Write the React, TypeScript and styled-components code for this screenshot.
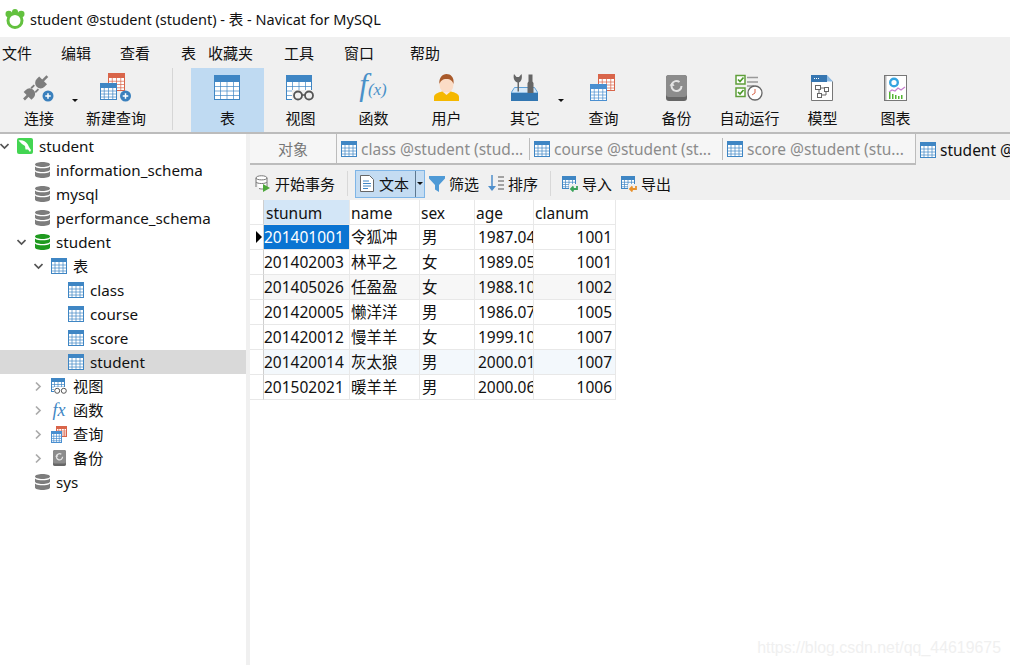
import React from 'react';
import styled, { createGlobalStyle } from 'styled-components';

const GlobalStyle = createGlobalStyle`
  html, body {
    margin: 0;
    padding: 0;
    width: 1010px;
    height: 665px;
    overflow: hidden;
    background: #fff;
    font-family: "Noto Sans", "Noto Sans CJK SC", sans-serif;
    color: #111;
  }
`;

const BLUE = '#3f86c4';
const RED = '#d9654a';

const Window = styled.div`
  position: relative;
  display: flex;
  flex-direction: column;
  width: 1010px;
  height: 665px;
  overflow: hidden;
`;

const TitleBar = styled.header`
  display: flex;
  align-items: center;
  gap: 5px;
  height: 37px;
  padding-left: 5px;
  font-size: 14.5px;
  background: #fff;
`;

const MenuBar = styled.nav`
  display: flex;
  align-items: center;
  height: 31px;
  padding-left: 2px;
  font-size: 15px;
  background: #f0f0f0;
`;

const MenuItem = styled.span<{ $w: number }>`
  width: ${(p) => p.$w}px;
  flex: none;
`;

const Toolbar = styled.div`
  display: flex;
  height: 64px;
  background: #f0f0f0;
  border-bottom: 2px solid #bcbcbc;
`;

const ToolButton = styled.div<{ $w?: number; $active?: boolean }>`
  position: relative;
  flex: none;
  width: ${(p) => p.$w ?? 73}px;
  height: 64px;
  display: flex;
  flex-direction: column;
  align-items: center;
  background: ${(p) => (p.$active ? '#bfdaf2' : 'transparent')};
`;

const ToolIcon = styled.div`
  height: 41px;
  display: flex;
  align-items: center;
  justify-content: center;
  padding: 0 1px 2px 0;
  box-sizing: border-box;
`;

const ToolLabel = styled.span`
  font-size: 15px;
  line-height: 18px;
  white-space: nowrap;
`;

const DropCaret = styled.span<{ $right: number }>`
  position: absolute;
  top: 31px;
  right: ${(p) => p.$right}px;
  border-left: 3px solid transparent;
  border-right: 3px solid transparent;
  border-top: 3px solid #111;
`;

const ToolSep = styled.div<{ $left: number; $right: number }>`
  flex: none;
  width: 1px;
  height: 62px;
  background: #d6d6d6;
  margin: 0 ${(p) => p.$right}px 0 ${(p) => p.$left}px;
`;

const FxMark = styled.span`
  font-family: "Liberation Serif", serif;
  font-style: italic;
  color: #4a90c8;
  font-size: 31px;
  line-height: 36px;
  white-space: nowrap;
  small {
    font-size: 17px;
  }
`;

const Body = styled.div`
  flex: 1;
  min-height: 0;
  display: flex;
`;

const Sidebar = styled.aside`
  flex: none;
  width: 246px;
  background: #fff;
  font-size: 15.2px;
`;

const Splitter = styled.div`
  flex: none;
  width: 4px;
  background: #f0f0f0;
`;

const TreeRow = styled.div<{ $level: number; $selected?: boolean }>`
  display: flex;
  align-items: center;
  height: 24px;
  padding-left: ${(p) => p.$level * 17}px;
  background: ${(p) => (p.$selected ? '#d9d9d9' : 'transparent')};
  white-space: nowrap;
`;

const Chevron = styled.span`
  flex: none;
  width: 17px;
  margin-left: -4px;
  margin-right: 4px;
  display: flex;
  justify-content: center;
`;

const TreeIcon = styled.span`
  flex: none;
  display: flex;
  width: 16px;
  height: 16px;
  margin-right: 6px;
  align-items: center;
  justify-content: center;
`;

const CjkLabel = styled.span`
  margin-top: -2px;
`;

const TreeFx = styled.span`
  font-family: "Liberation Serif", serif;
  font-style: italic;
  font-size: 18px;
  color: ${BLUE};
  white-space: nowrap;
`;

const Main = styled.main`
  flex: 1;
  min-width: 0;
  display: flex;
  flex-direction: column;
  background: #fff;
`;

const TabStrip = styled.div`
  display: flex;
  height: 31px;
  flex: none;
  background: #f0f0f0;
  font-size: 15.5px;
  white-space: nowrap;
  overflow: hidden;
`;

const ObjectTab = styled.div`
  flex: none;
  width: 87px;
  box-sizing: border-box;
  display: flex;
  align-items: center;
  justify-content: center;
  font-size: 15px;
  color: #777;
  background: #f6f6f6;
  border-bottom: 2px solid #bcbcbc;
  border-right: 1px solid #bcbcbc;
`;

const Tab = styled.div<{ $edge?: boolean }>`
  flex: none;
  width: 193px;
  box-sizing: border-box;
  padding-left: 4px;
  display: flex;
  align-items: center;
  gap: 4px;
  color: #8c8c8c;
  border-bottom: 2px solid #bcbcbc;
  border-right: ${(p) => (p.$edge ? '1px solid #bcbcbc' : '0')};
  background: ${(p) =>
    p.$edge
      ? '#f6f6f6'
      : 'linear-gradient(#bcbcbc, #bcbcbc) right center / 1px 22px no-repeat #f6f6f6'};
`;

const ActiveTab = styled.div`
  flex: none;
  padding-left: 4px;
  display: flex;
  align-items: center;
  gap: 4px;
  color: #111;
`;

const SubBar = styled.div`
  flex: none;
  display: flex;
  align-items: center;
  box-sizing: border-box;
  height: 35px;
  padding: 2px 0 0 5px;
  background: #f0f0f0;
  font-size: 15px;
  white-space: nowrap;
`;

const SubItem = styled.div<{ $w: number }>`
  flex: none;
  width: ${(p) => p.$w}px;
  display: flex;
  align-items: center;
  gap: 4px;
`;

const SubSep = styled.div<{ $left: number; $right: number }>`
  flex: none;
  width: 1px;
  height: 25px;
  background: #d8d8d8;
  margin: 0 ${(p) => p.$right}px 0 ${(p) => p.$left}px;
`;

const TextButton = styled.div`
  flex: none;
  width: 70px;
  height: 28px;
  box-sizing: border-box;
  display: flex;
  align-items: center;
  margin-right: 4px;
  padding-left: 4px;
  gap: 5px;
  background: #c4dcf2;
  border: 1px solid #7fb5e6;
`;

const ButtonSplit = styled.span`
  margin-left: auto;
  width: 8px;
  height: 100%;
  display: flex;
  align-items: center;
  justify-content: center;
  border-left: 1px solid #5d7890;
  &::after {
    content: '';
    border-left: 3px solid transparent;
    border-right: 3px solid transparent;
    border-top: 3px solid #111;
  }
`;

const Grid = styled.div`
  display: grid;
  grid-template-columns: 14px 86px 70px 55px 59px 82px;
  width: 366px;
  font-size: 15.5px;
`;

const Cell = styled.div<{ $right?: boolean; $bg?: string; $selected?: boolean; $pad: number }>`
  height: 25px;
  box-sizing: border-box;
  padding: 0 3px 0 ${(p) => p.$pad}px;
  line-height: 24px;
  overflow: hidden;
  white-space: nowrap;
  text-align: ${(p) => (p.$right ? 'right' : 'left')};
  color: ${(p) => (p.$selected ? '#fff' : '#111')};
  background: ${(p) => (p.$selected ? '#0a74d2' : p.$bg ?? '#fff')};
  border-right: 1px solid #e8e8e8;
  border-bottom: 1px solid #e8e8e8;
`;

const HeaderCell = styled(Cell)<{ $current?: boolean }>`
  line-height: 26px;
  background: ${(p) => (p.$current ? '#d3e6f7' : '#fff')};
`;

const RowHead = styled.div<{ $marker?: boolean }>`
  height: 25px;
  box-sizing: border-box;
  border-right: 1px solid #cfcfcf;
  border-bottom: 1px solid #e8e8e8;
  display: flex;
  align-items: center;
  justify-content: flex-end;
  padding-right: 1px;
  &::after {
    content: '';
    display: ${(p) => (p.$marker ? 'block' : 'none')};
    border-top: 6px solid transparent;
    border-bottom: 6px solid transparent;
    border-left: 6px solid #000;
  }
`;

const Watermark = styled.div`
  position: absolute;
  right: 9px;
  bottom: 8px;
  font-family: "Liberation Sans", sans-serif;
  font-size: 15.9px;
  color: #f0f0f0;
`;

const tableShape = (x: number, y: number, w: number, h: number, color: string, head: number) => {
  const lines = [];
  const top = y + head;
  for (let i = 1; i < 4; i++) {
    const lx = x + (w * i) / 4;
    lines.push(<line key={'v' + i} x1={lx} y1={top} x2={lx} y2={y + h} stroke={color} strokeOpacity={0.7} />);
    const ly = top + ((h - head) * i) / 4;
    lines.push(<line key={'h' + i} x1={x} y1={ly} x2={x + w} y2={ly} stroke={color} strokeOpacity={0.7} />);
  }
  return (
    <g>
      <rect x={x + 0.5} y={y + 0.5} width={w - 1} height={h - 1} fill="#fff" stroke={color} />
      {lines}
      <path d={`M${x} ${y + 1.5}a1.5 1.5 0 0 1 1.5-1.5h${w - 3}a1.5 1.5 0 0 1 1.5 1.5v${head - 1.5}h-${w}z`} fill={color} />
    </g>
  );
};

const plusBadge = (cx: number, cy: number, r: number) => (
  <g>
    <circle cx={cx} cy={cy} r={r} fill="#3a80bd" />
    <path d={`M${cx - r / 2} ${cy}h${r}M${cx} ${cy - r / 2}v${r}`} stroke="#fff" strokeWidth={1.5} />
  </g>
);

const PlugIcon = () => (
  <svg width="32" height="28" viewBox="0 0 32 28">
    <g transform="translate(1 25.500) rotate(-45)" fill="#7d7d7d">
      <rect x="0" y="-1.300" width="6" height="2.600" />
      <path d="M5 -5.500h3a5.500 5.500 0 0 1 0 11h-3z" />
      <rect x="13" y="-3.800" width="4.500" height="1.800" />
      <rect x="13" y="2" width="4.500" height="1.800" />
      <path d="M27 -5.500h-3.500a5.500 5.500 0 0 0 0 11h3.500z" />
      <rect x="26" y="-1.300" width="7" height="2.600" />
    </g>
    {plusBadge(25, 22, 5.500)}
  </svg>
);

const NewQueryIcon = () => (
  <svg width="32" height="30" viewBox="0 0 32 30">
    {tableShape(8, 0, 17, 18, RED, 5)}
    {tableShape(0, 10, 17, 17, BLUE, 5)}
    {plusBadge(25.500, 23, 5.500)}
  </svg>
);

const BigTableIcon = () => (
  <svg width="26" height="25" viewBox="0 0 26 25">
    {tableShape(0, 0, 26, 25, BLUE, 7)}
  </svg>
);

const ViewIcon = () => (
  <svg width="29" height="26" viewBox="0 0 29 26">
    {tableShape(0, 0, 26, 25, BLUE, 7)}
    <rect x="6" y="15" width="23" height="11" fill="#f0f0f0" />
    <circle cx="12" cy="20.500" r="4" fill="#f0f0f0" stroke="#555" strokeWidth="1.800" />
    <circle cx="23" cy="20.500" r="4" fill="#f0f0f0" stroke="#555" strokeWidth="1.800" />
    <path d="M16 20h3" stroke="#555" strokeWidth="1.500" />
  </svg>
);

const UserIcon = () => (
  <svg width="25" height="27" viewBox="0 0 25 27">
    <path d="M0 27v-4c0-3 4-4.500 8-5.500h9c4 1 8 2.500 8 5.500v4z" fill="#f5b800" />
    <ellipse cx="12.500" cy="10.500" rx="7" ry="8.500" fill="#fbdcc6" />
    <path d="M9 18h7l-3.500 3z" fill="#fbe9dc" />
    <path d="M5.500 10c-1-6 3-10 7-10s8 3 7 10c-1-3-3-5-7-5s-6 2-7 5z" fill="#a95a2a" />
  </svg>
);

const ToolsIcon = () => (
  <svg width="27" height="27" viewBox="0 0 27 27">
    <path d="M3.500 13.500h20L27 19H0z" fill="#d7e9f8" stroke="#5d9fd6" />
    <path d="M0 19h27v8H0z" fill="#3276b1" />
    <path d="M7 19V10C3.500 9 2.500 5 3.500 1.500L6 4.500h2.500L11 1.500c1 3.500 0 7.500-2.500 8.500v9z" fill="#666" transform="translate(-.5 -1.500)" />
    <path d="M17.500 .5h4v7l1 1.500v10h-6V9l1-1.500z" fill="#666" />
  </svg>
);

const QueryIcon = () => (
  <svg width="27" height="27" viewBox="0 0 27 27">
    {tableShape(8, 0, 17, 17, RED, 5)}
    {tableShape(0, 10, 17, 17, '#4a8fd0', 5)}
  </svg>
);

const BackupIcon = ({ w = 21, h = 26 }: { w?: number; h?: number }) => (
  <svg width={w} height={h} viewBox="0 0 21 26">
    <rect x="0" y="0" width="21" height="26" rx="3" fill="#666" />
    <rect x="0" y="0" width="21" height="22" rx="3" fill="#8c8c8c" />
    <path d="M15.500 11a5 5 0 1 1-2-4" fill="none" stroke="#e4e4e4" strokeWidth="2" />
    <path d="M3.500 10.500l3-3.500 2 4z" fill="#e4e4e4" />
  </svg>
);

const AutoRunIcon = () => (
  <svg width="28" height="27" viewBox="0 0 28 27">
    <g fill="#fff" stroke="#5f9e3a" strokeWidth="1.500">
      <rect x="1" y="1.500" width="9" height="8.500" />
      <rect x="1" y="14" width="9" height="8.500" />
    </g>
    <path d="M3 5.500l2 2 3.500-4M3 18l2 2 3.500-4" fill="none" stroke="#4c9a2a" strokeWidth="1.700" />
    <path d="M12 3.500h11M12 8h11M12 12h7" stroke="#999" strokeWidth="1.500" />
    <circle cx="20" cy="19" r="7" fill="#fff" stroke="#666" strokeWidth="1.300" />
    <path d="M20 19v-4M20 19l-3 2" stroke="#d9654a" strokeWidth="1" />
  </svg>
);

const ModelIcon = () => (
  <svg width="22" height="26" viewBox="0 0 22 26">
    <path d="M.5 .5h15l6 6v19H.5z" fill="#fff" stroke="#777" />
    <path d="M0 0h16v7H0z" fill="#3676b1" />
    <path d="M16 0l6 6.500h-6z" fill="#8fbce4" />
    <path d="M3 3.500h1M5 3.500h1M7 3.500h1" stroke="#fff" />
    <g fill="none" stroke="#666">
      <rect x="4.500" y="10.500" width="5" height="4" />
      <rect x="13.500" y="12.500" width="4" height="4" />
      <rect x="6.500" y="18.500" width="4" height="4" />
      <path d="M9.500 13h4M8 14.500v4M10.500 20h4.500v-3.500" />
    </g>
  </svg>
);

const ChartIcon = () => (
  <svg width="23" height="26" viewBox="0 0 23 26">
    <rect x=".5" y=".5" width="22" height="25" fill="#fff" stroke="#777" />
    <path d="M1 1h1.500v24H1z" fill="#bbb" />
    <circle cx="10" cy="7.500" r="3.800" fill="none" stroke="#35a4e0" strokeWidth="2.400" />
    <path d="M5 17l3-2 3 1 3-3 3 2 4-3" fill="none" stroke="#c77fd0" strokeWidth="1.200" />
    <path d="M5 24v-7h1.500v7zM8 24v-5h1.500v5zM11 24v-4h1.500v4zM14 24v-3h1.500v3zM17 24v-4h1.500v4z" fill="#55b433" />
  </svg>
);

const LogoIcon = () => (
  <svg width="20" height="20" viewBox="0 0 20 20">
    <circle cx="3.800" cy="5" r="3.300" fill="#63c13f" />
    <circle cx="10" cy="3" r="3" fill="#63c13f" />
    <circle cx="16.200" cy="5" r="3.300" fill="#63c13f" />
    <circle cx="10" cy="11.500" r="7" fill="#fff" stroke="#63c13f" strokeWidth="3" />
  </svg>
);

const SmallTable = ({ c = BLUE }: { c?: string }) => (
  <svg width="16" height="16" viewBox="0 0 16 16">
    {tableShape(0, 0, 16, 16, c, 4)}
  </svg>
);

const DolphinIcon = () => (
  <svg width="16" height="16" viewBox="0 0 16 16">
    <rect width="16" height="16" rx="2" fill="#43d552" />
    <path d="M1.500 2.500c3-1 7 0 9 3.500 1 1.500 1.500 3.500 3.500 6l-1 2-2-2.500-2.500 0-.5-3.500-3-2z" fill="#fff" />
  </svg>
);

const DbIcon = ({ c = '#7d7d7d' }: { c?: string }) => (
  <svg width="15" height="16" viewBox="0 0 15 16">
    <g fill={c}>
      <path d="M0 2.500C0 1 3.500 0 7.500 0S15 1 15 2.500 11.500 5 7.500 5 0 4 0 2.500z" />
      <path d="M0 4.500C1.500 6 4.500 6.300 7.500 6.300S13.500 6 15 4.500v3C15 9 11.500 10 7.500 10S0 9 0 7.500z" />
      <path d="M0 9.500C1.500 11 4.500 11.300 7.500 11.300S13.500 11 15 9.500v4C15 15 11.500 16 7.500 16S0 15 0 13.500z" />
    </g>
  </svg>
);

const SmallViewIcon = () => (
  <svg width="16" height="16" viewBox="0 0 16 16">
    {tableShape(0, 0, 14, 14, BLUE, 4)}
    <rect x="3" y="9" width="13" height="7" fill="#fff" />
    <circle cx="6.200" cy="12.800" r="2.500" fill="#fff" stroke="#555" />
    <circle cx="12.800" cy="12.800" r="2.500" fill="#fff" stroke="#555" />
  </svg>
);

const SmallQueryIcon = () => (
  <svg width="16" height="17" viewBox="0 0 16 17">
    {tableShape(5, 0, 11, 11, RED, 3)}
    {tableShape(0, 5, 11, 12, '#4a8fd0', 3)}
  </svg>
);

const Arrow = ({ open }: { open?: boolean }) => (
  <svg width="9" height="11" viewBox="0 0 9 11">
    {open ? (
      <path d="M.5 3l4 4 4-4" fill="none" stroke="#555" strokeWidth="1.700" />
    ) : (
      <path d="M2 1.500l4 4-4 4" fill="none" stroke="#aaa" strokeWidth="1.700" />
    )}
  </svg>
);

const TxIcon = () => (
  <svg width="16" height="17" viewBox="0 0 16 17">
    <path d="M1 3c0-3 11-3 11 0v9c0 2-5 2.500-8 1.500" fill="#fff" stroke="#777" />
    <path d="M1 3v9M1 3c0 2.500 11 2.500 11 0M1 7c1 2 10 2 11 0" fill="none" stroke="#777" />
    <path d="M8 9l7 4-7 4z" fill="#4da83a" />
  </svg>
);

const DocIcon = () => (
  <svg width="14" height="17" viewBox="0 0 14 17">
    <path d="M.5 .5h9l4 4v12H.5z" fill="#fff" stroke="#666" />
    <path d="M3 6h6M3 8.500h8M3 11h8M3 13.500h5" stroke="#3f86c4" />
  </svg>
);

const FilterIcon = () => (
  <svg width="16" height="16" viewBox="0 0 16 16">
    <path d="M0 0h16v2.500L10 9v7l-4-2.500V9L0 2.500z" fill="#4f9ad6" />
  </svg>
);

const SortIcon = () => (
  <svg width="16" height="17" viewBox="0 0 16 17">
    <path d="M4 0v13" stroke="#4f8fcb" strokeWidth="1.500" />
    <path d="M0 11h8l-4 5z" fill="#4f8fcb" />
    <path d="M10 2h6M10 6h6M10 10h6M10 14h6" stroke="#555" />
  </svg>
);

const ImportIcon = ({ c }: { c: string }) => (
  <svg width="16" height="16" viewBox="0 0 16 16">
    {tableShape(0, 0, 14, 13, BLUE, 4)}
    <rect x="7" y="8" width="9" height="8" fill="#f0f0f0" />
    <path d="M15 10v3H10M11.500 10.500L9 13l2.500 2.500" fill="none" stroke={c} strokeWidth="1.800" />
  </svg>
);

const tools = [
  { label: '表', icon: <BigTableIcon />, active: true },
  { label: '视图', icon: <ViewIcon /> },
  { label: '函数', icon: <FxMark>f<small>(x)</small></FxMark> },
  { label: '用户', icon: <UserIcon /> },
  { label: '其它', icon: <ToolsIcon />, w: 84, caret: 3 },
  { label: '查询', icon: <QueryIcon /> },
  { label: '备份', icon: <BackupIcon /> },
  { label: '自动运行', icon: <AutoRunIcon /> },
  { label: '模型', icon: <ModelIcon /> },
  { label: '图表', icon: <ChartIcon /> },
];

const menus: [string, number][] = [
  ['文件', 59],
  ['编辑', 59],
  ['查看', 61],
  ['表', 27],
  ['收藏夹', 76],
  ['工具', 60],
  ['窗口', 66],
  ['帮助', 50],
];

const columns = ['stunum', 'name', 'sex', 'age', 'clanum'];
const headerPad = [2, 1, 1, 1, 1];
const cellPad = [0, 1, 2, 3, 2];

const rows = [
  ['201401001', '令狐冲', '男', '1987.04', '1001'],
  ['201402003', '林平之', '女', '1989.05', '1001'],
  ['201405026', '任盈盈', '女', '1988.10', '1002'],
  ['201420005', '懒洋洋', '男', '1986.07', '1005'],
  ['201420012', '慢羊羊', '女', '1999.10', '1007'],
  ['201420014', '灰太狼', '男', '2000.01', '1007'],
  ['201502021', '暖羊羊', '男', '2000.06', '1006'],
];

const rowTint: Record<number, string> = { 2: '#f7f7f7', 5: '#f3f8fc' };

export default function App() {
  return (
    <Window>
      <GlobalStyle />
      <TitleBar>
        <LogoIcon />
        student @student (student) - 表 - Navicat for MySQL
      </TitleBar>
      <MenuBar>
        {menus.map(([m, w]) => (
          <MenuItem key={m} $w={w}>{m}</MenuItem>
        ))}
      </MenuBar>
      <Toolbar>
        <ToolButton $w={78}>
          <ToolIcon><PlugIcon /></ToolIcon>
          <ToolLabel>连接</ToolLabel>
          <DropCaret $right={0} />
        </ToolButton>
        <ToolButton $w={76}>
          <ToolIcon><NewQueryIcon /></ToolIcon>
          <ToolLabel>新建查询</ToolLabel>
        </ToolButton>
        <ToolSep $left={18} $right={18} />
        {tools.map((t) => (
          <ToolButton key={t.label} $w={t.w} $active={t.active}>
            <ToolIcon>{t.icon}</ToolIcon>
            <ToolLabel>{t.label}</ToolLabel>
            {t.caret ? <DropCaret $right={t.caret} /> : null}
          </ToolButton>
        ))}
      </Toolbar>
      <Body>
        <Sidebar>
          <TreeRow $level={0}>
            <Chevron><Arrow open /></Chevron>
            <TreeIcon><DolphinIcon /></TreeIcon>student
          </TreeRow>
          <TreeRow $level={1}><Chevron /><TreeIcon><DbIcon /></TreeIcon>information_schema</TreeRow>
          <TreeRow $level={1}><Chevron /><TreeIcon><DbIcon /></TreeIcon>mysql</TreeRow>
          <TreeRow $level={1}><Chevron /><TreeIcon><DbIcon /></TreeIcon>performance_schema</TreeRow>
          <TreeRow $level={1}>
            <Chevron><Arrow open /></Chevron>
            <TreeIcon><DbIcon c="#1f9a1f" /></TreeIcon>student
          </TreeRow>
          <TreeRow $level={2}>
            <Chevron><Arrow open /></Chevron>
            <TreeIcon><SmallTable /></TreeIcon><CjkLabel>表</CjkLabel>
          </TreeRow>
          <TreeRow $level={3}><Chevron /><TreeIcon><SmallTable /></TreeIcon>class</TreeRow>
          <TreeRow $level={3}><Chevron /><TreeIcon><SmallTable /></TreeIcon>course</TreeRow>
          <TreeRow $level={3}><Chevron /><TreeIcon><SmallTable /></TreeIcon>score</TreeRow>
          <TreeRow $level={3} $selected><Chevron /><TreeIcon><SmallTable /></TreeIcon>student</TreeRow>
          <TreeRow $level={2}>
            <Chevron><Arrow /></Chevron>
            <TreeIcon><SmallViewIcon /></TreeIcon><CjkLabel>视图</CjkLabel>
          </TreeRow>
          <TreeRow $level={2}>
            <Chevron><Arrow /></Chevron>
            <TreeIcon><TreeFx>fx</TreeFx></TreeIcon><CjkLabel>函数</CjkLabel>
          </TreeRow>
          <TreeRow $level={2}>
            <Chevron><Arrow /></Chevron>
            <TreeIcon><SmallQueryIcon /></TreeIcon><CjkLabel>查询</CjkLabel>
          </TreeRow>
          <TreeRow $level={2}>
            <Chevron><Arrow /></Chevron>
            <TreeIcon><BackupIcon w={13} h={16} /></TreeIcon><CjkLabel>备份</CjkLabel>
          </TreeRow>
          <TreeRow $level={1}><Chevron /><TreeIcon><DbIcon /></TreeIcon>sys</TreeRow>
        </Sidebar>
        <Splitter />
        <Main>
          <TabStrip>
            <ObjectTab>对象</ObjectTab>
            <Tab><SmallTable />class @student (stud...</Tab>
            <Tab><SmallTable />course @student (st...</Tab>
            <Tab $edge><SmallTable />score @student (stu...</Tab>
            <ActiveTab><SmallTable />student @student (student) - 表</ActiveTab>
          </TabStrip>
          <SubBar>
            <SubItem $w={92}><TxIcon />开始事务</SubItem>
            <SubSep $left={0} $right={7} />
            <TextButton>
              <DocIcon />文本<ButtonSplit />
            </TextButton>
            <SubItem $w={59}><FilterIcon />筛选</SubItem>
            <SubItem $w={62}><SortIcon />排序</SubItem>
            <SubSep $left={0} $right={11} />
            <SubItem $w={59}><ImportIcon c="#3aa35a" />导入</SubItem>
            <SubItem $w={60}><ImportIcon c="#e8912d" />导出</SubItem>
          </SubBar>
          <Grid>
            <RowHead />
            {columns.map((c, i) => (
              <HeaderCell key={c} $pad={headerPad[i]} $current={i === 0}>{c}</HeaderCell>
            ))}
            {rows.map((row, r) => (
              <React.Fragment key={row[0]}>
                <RowHead $marker={r === 0} />
                {row.map((v, c) => (
                  <Cell key={c} $pad={cellPad[c]} $right={c === 4} $bg={rowTint[r]} $selected={r === 0 && c === 0}>
                    {v}
                  </Cell>
                ))}
              </React.Fragment>
            ))}
          </Grid>
        </Main>
      </Body>
      <Watermark>https://blog.csdn.net/qq_44619675</Watermark>
    </Window>
  );
}
